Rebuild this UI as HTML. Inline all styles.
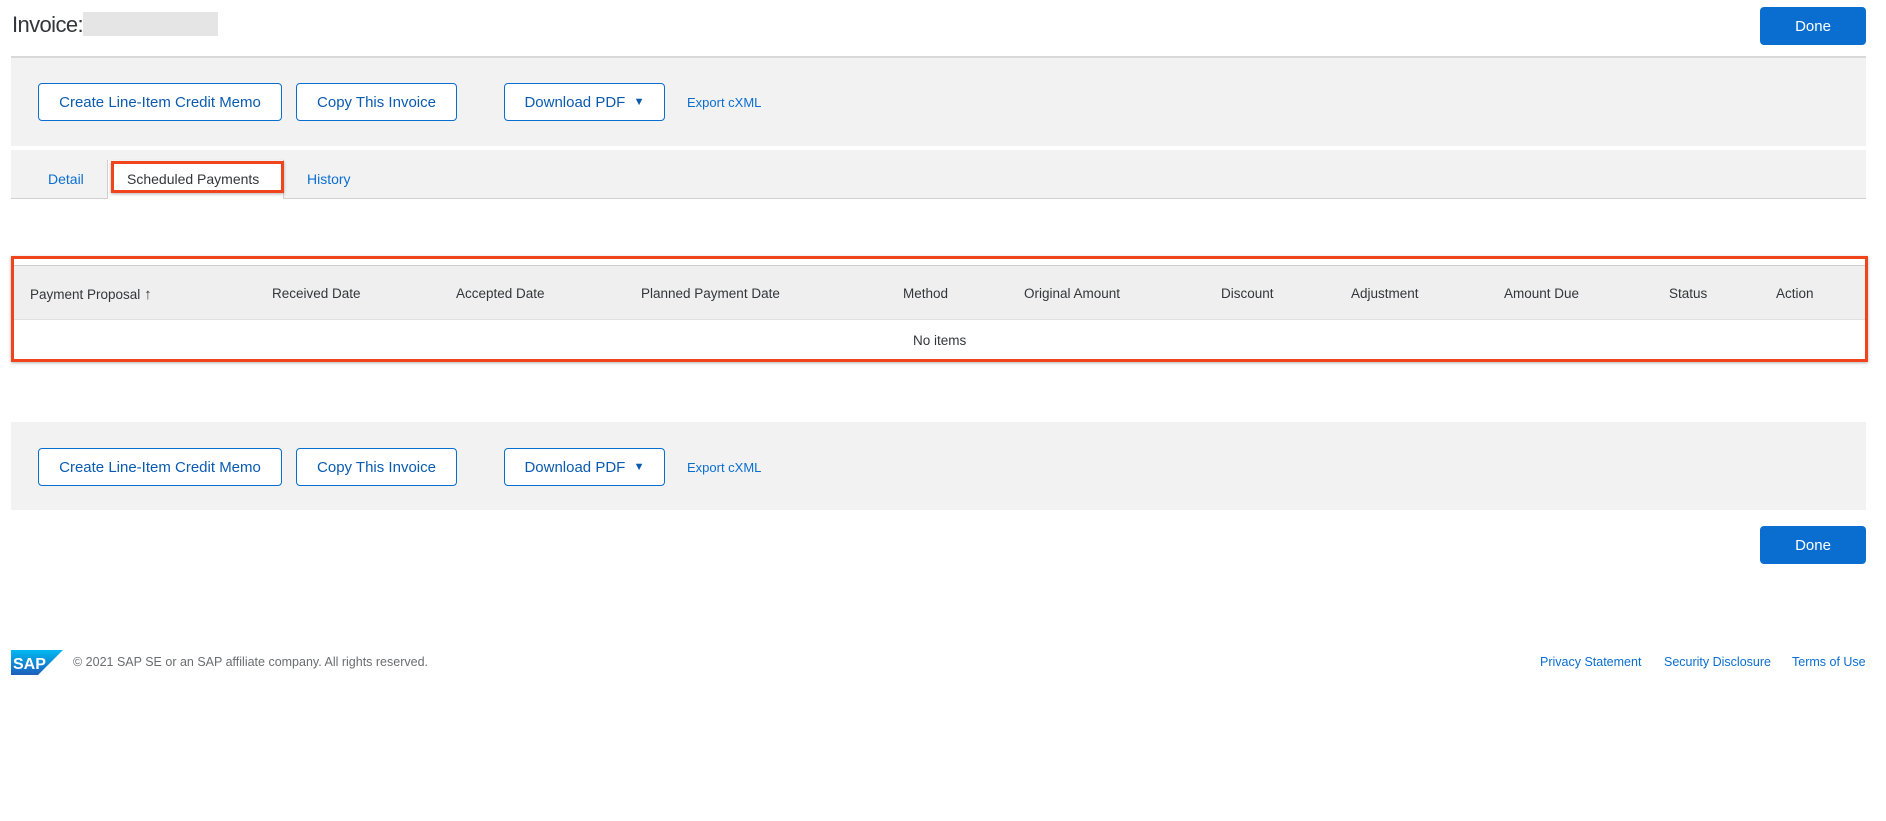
<!DOCTYPE html>
<html><head><meta charset="utf-8"><style>
*{box-sizing:border-box;margin:0;padding:0}
body{width:1886px;height:821px;background:#fff;font-family:"Liberation Sans",Arial,sans-serif;position:relative;overflow:hidden;color:#32363a}
.a{position:absolute}
.btn{position:absolute;height:38px;border:1px solid #0a6ed1;border-radius:4px;background:#fff;color:#0a5bb0;font-size:15px;display:flex;align-items:center;justify-content:center}
.done{position:absolute;left:1760px;width:106px;height:38px;background:#0a6ed1;color:#fff;border-radius:4px;font-size:15px;display:flex;align-items:center;justify-content:center}
.link{position:absolute;color:#0a6ed1;font-size:13px}
.bar{position:absolute;left:11px;width:1855px;background:#f2f2f2}
.th{position:absolute;top:286px;font-size:13.5px;color:#32363a}
.ft{position:absolute;top:655px;font-size:12.5px}
</style></head><body>
<div class="a" style="left:12px;top:12px;font-size:22px;letter-spacing:-0.6px;color:#32363a">Invoice:</div>
<div class="a" style="left:83px;top:12px;width:135px;height:24px;background:#e5e5e5"></div>
<div class="done" style="top:7px">Done</div>
<div class="a" style="left:11px;top:56px;width:1855px;height:2px;background:#d9d9d9"></div>

<div class="bar" style="top:58px;height:88px"></div>
<div class="btn" style="left:38px;top:83px;width:244px">Create Line-Item Credit Memo</div>
<div class="btn" style="left:296px;top:83px;width:161px">Copy This Invoice</div>
<div class="btn" style="left:504px;top:83px;width:161px">Download PDF&nbsp;&nbsp;<span style="font-size:11px">▼</span></div>
<div class="link" style="left:687px;top:95px">Export cXML</div>

<div class="bar" style="top:150px;height:48px"></div>
<div class="a" style="left:11px;top:198px;width:1855px;height:1px;background:#d0d0d0"></div>
<div class="a" style="left:107px;top:160px;width:177px;height:39px;background:#fff;border-left:1px solid #d0d0d0;border-right:1px solid #d0d0d0"></div>
<div class="a" style="left:111px;top:161px;width:173px;height:32px;border:3px solid #f0441c;box-shadow:0 1px 3px rgba(0,0,0,.3)"></div>
<div class="link" style="left:48px;top:171px;font-size:14px">Detail</div>
<div class="a" style="left:127px;top:171px;font-size:14px;color:#32363a">Scheduled Payments</div>
<div class="link" style="left:307px;top:171px;font-size:14px">History</div>

<div class="a" style="left:11px;top:256px;width:1857px;height:106px;border:3px solid #f0441c;box-shadow:0 1px 3px rgba(0,0,0,.3)"></div>
<div class="a" style="left:14px;top:265px;width:1851px;height:55px;background:#efefef;border-top:1px solid #ccc;border-bottom:1px solid #e0e0e0"></div>
<div class="th" style="left:30px">Payment Proposal <span style="font-size:15px">↑</span></div>
<div class="th" style="left:272px">Received Date</div>
<div class="th" style="left:456px">Accepted Date</div>
<div class="th" style="left:641px">Planned Payment Date</div>
<div class="th" style="left:903px">Method</div>
<div class="th" style="left:1024px">Original Amount</div>
<div class="th" style="left:1221px">Discount</div>
<div class="th" style="left:1351px">Adjustment</div>
<div class="th" style="left:1504px">Amount Due</div>
<div class="th" style="left:1669px">Status</div>
<div class="th" style="left:1776px">Action</div>
<div class="a" style="left:913px;top:333px;font-size:13.5px">No items</div>

<div class="bar" style="top:422px;height:88px"></div>
<div class="btn" style="left:38px;top:448px;width:244px">Create Line-Item Credit Memo</div>
<div class="btn" style="left:296px;top:448px;width:161px">Copy This Invoice</div>
<div class="btn" style="left:504px;top:448px;width:161px">Download PDF&nbsp;&nbsp;<span style="font-size:11px">▼</span></div>
<div class="link" style="left:687px;top:460px">Export cXML</div>
<div class="done" style="top:526px">Done</div>

<svg class="a" style="left:11px;top:650px" width="52" height="25" viewBox="0 0 52 25"><defs><linearGradient id="g" x1="0" y1="0" x2="0" y2="1"><stop offset="0" stop-color="#00b8f1"/><stop offset="1" stop-color="#1e5fbb"/></linearGradient></defs><polygon points="0,0 52,0 27,25 0,25" fill="url(#g)"/><text x="2" y="19" font-family="Liberation Sans" font-weight="bold" font-size="16" fill="#fff">SAP</text></svg>
<div class="ft" style="left:73px;color:#6a6d70">© 2021 SAP SE or an SAP affiliate company. All rights reserved.</div>
<div class="ft" style="left:1540px;color:#0a6ed1">Privacy Statement</div>
<div class="ft" style="left:1664px;color:#0a6ed1">Security Disclosure</div>
<div class="ft" style="left:1792px;color:#0a6ed1">Terms of Use</div>
</body></html>
